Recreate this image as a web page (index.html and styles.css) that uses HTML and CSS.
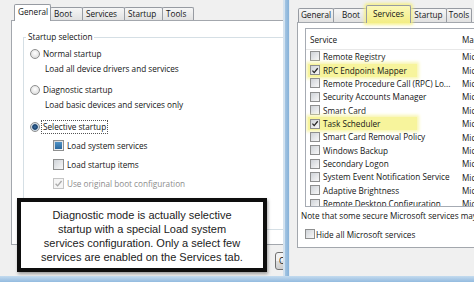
FILE: index.html
```html
<!DOCTYPE html>
<html lang="en">
<head>
<meta charset="utf-8">
<title>System Configuration</title>
<link rel="stylesheet" href="styles.css">
</head>
<body>
<div class="stage">
  <div class="main">
    <section class="pane pane-left">
      <div class="tabs tabs-left">
        <div class="tab tab-sel tl-general">General</div>
        <div class="tab tl-boot">Boot</div>
        <div class="tab tl-services">Services</div>
        <div class="tab tl-startup">Startup</div>
        <div class="tab tl-tools">Tools</div>
      </div>
      <div class="page page-left">
        <fieldset class="group">
          <legend class="group-title">Startup selection</legend>
          <div class="group-body">
            <div class="opt"><span class="radio"></span><span class="opt-label">Normal startup</span></div>
            <div class="desc">Load all device drivers and services</div>
            <div class="opt opt-gap1"><span class="radio"></span><span class="opt-label">Diagnostic startup</span></div>
            <div class="desc">Load basic devices and services only</div>
            <div class="opt opt-gap2"><span class="radio radio-on"></span><span class="opt-label focus">Selective startup</span></div>
            <div class="sub"><span class="check check-mixed"></span><span>Load system services</span></div>
            <div class="sub"><span class="check"></span><span>Load startup items</span></div>
            <div class="sub sub-disabled"><span class="check check-disabled"><svg viewBox="0 0 10 10"><path d="M1.8 5.2 L4 7.6 L8.4 2.2" fill="none" stroke="#a9a9a9" stroke-width="1.5"/></svg></span><span>Use original boot configuration</span></div>
          </div>
        </fieldset>
      </div>
      <div class="btnbar"><div class="btn">Cancel</div></div>
      <div class="callout">Diagnostic mode is actually selective<br>startup with a special Load system<br>services configuration. Only a select few<br>services are enabled on the Services tab.</div>
    </section>
    <div class="divider"></div>
    <section class="pane pane-right">
      <div class="tabs tabs-right">
        <div class="tab tr-general">General</div>
        <div class="tab tr-boot">Boot</div>
        <div class="tab tab-sel tab-hl tr-services">Services</div>
        <div class="tab tr-startup">Startup</div>
        <div class="tab tr-tools">Tools</div>
      </div>
      <div class="page page-right">
        <div class="list">
          <div class="list-head"><span class="col-name">Service</span><span class="col-mfr">Manufacturer</span></div>
          <div class="row"><span class="col-name"><span class="item"><span class="check"></span>Remote Registry</span></span><span class="col-mfr">Microsoft Corporation</span></div>
          <div class="row"><span class="col-name"><span class="item hl"><span class="check"><svg viewBox="0 0 10 10"><path d="M1.8 5.2 L4 7.6 L8.4 2.2" fill="none" stroke="#262626" stroke-width="1.6"/></svg></span>RPC Endpoint Mapper</span></span><span class="col-mfr">Microsoft Corporation</span></div>
          <div class="row"><span class="col-name"><span class="item"><span class="check"></span>Remote Procedure Call (RPC) Lo...</span></span><span class="col-mfr">Microsoft Corporation</span></div>
          <div class="row"><span class="col-name"><span class="item"><span class="check"></span>Security Accounts Manager</span></span><span class="col-mfr">Microsoft Corporation</span></div>
          <div class="row"><span class="col-name"><span class="item"><span class="check"></span>Smart Card</span></span><span class="col-mfr">Microsoft Corporation</span></div>
          <div class="row"><span class="col-name"><span class="item hl"><span class="check"><svg viewBox="0 0 10 10"><path d="M1.8 5.2 L4 7.6 L8.4 2.2" fill="none" stroke="#262626" stroke-width="1.6"/></svg></span>Task Scheduler</span></span><span class="col-mfr">Microsoft Corporation</span></div>
          <div class="row"><span class="col-name"><span class="item"><span class="check"></span>Smart Card Removal Policy</span></span><span class="col-mfr">Microsoft Corporation</span></div>
          <div class="row"><span class="col-name"><span class="item"><span class="check"></span>Windows Backup</span></span><span class="col-mfr">Microsoft Corporation</span></div>
          <div class="row"><span class="col-name"><span class="item"><span class="check"></span>Secondary Logon</span></span><span class="col-mfr">Microsoft Corporation</span></div>
          <div class="row"><span class="col-name"><span class="item"><span class="check"></span>System Event Notification Service</span></span><span class="col-mfr">Microsoft Corporation</span></div>
          <div class="row"><span class="col-name"><span class="item"><span class="check"></span>Adaptive Brightness</span></span><span class="col-mfr">Microsoft Corporation</span></div>
          <div class="row"><span class="col-name"><span class="item"><span class="check"></span>Remote Desktop Configuration</span></span><span class="col-mfr">Microsoft Corporation</span></div>
        </div>
        <div class="note">Note that some secure Microsoft services may not be disabled.</div>
        <div class="hide"><span class="check"></span><span>Hide all Microsoft services</span></div>
      </div>
    </section>
  </div>
  <div class="frame-bottom"></div>
</div>
</body>
</html>
```
FILE: styles.css
```css
* { box-sizing: border-box; margin: 0; padding: 0; }
html, body { width: 474px; height: 282px; overflow: hidden; }
body {
  background: #f0f0f0;
  font-family: "Open Sans", "Noto Sans", sans-serif;
  font-size: 8.2px;
  color: #141414;
}
.stage { width: 474px; height: 282px; display: flex; flex-direction: column; }
.main { display: flex; height: 276px; flex: none; }
.frame-bottom { flex: 1; background: linear-gradient(#c4dbef, #93bbdf); }

.pane { position: relative; overflow: hidden; display: flex; flex-direction: column; background: #f0f0f0; }
.pane-left { width: 283px; flex: none; padding-left: 11px; }
.pane-right { flex: 1; padding-left: 7px; }
.divider {
  width: 7px; flex: none;
  background: linear-gradient(90deg, #d3e2ef 0, #d3e2ef 2px, #a3c5e3 2px, #86b1d8 6px, #e4ebf1 6px);
}

/* tabs */
.tabs { display: flex; align-items: flex-end; flex: none; position: relative; z-index: 1; }
.tab {
  flex: none; border: 1px solid #979ba2; border-bottom: 0; margin-right: -1px;
  background: linear-gradient(#f6f6f6, #e1e1e1); white-space: nowrap;
  border-radius: 2px 2px 0 0;
}
.tab-sel { background: #fff; position: relative; z-index: 2; }

.tabs-left { height: 20px; padding-left: 5px; }
.tabs-left .tab { height: 13px; line-height: 12px; padding-left: 3px; }
.tabs-left .tab-sel { height: 17px; line-height: 14px; margin-left: -2px; margin-bottom: -1px; }
.tl-general { width: 37px; }
.tl-boot { width: 33px; }
.tl-services { width: 43px; }
.tl-startup { width: 39px; }
.tl-tools { width: 32px; }

.tabs-right { height: 22px; padding-left: 1px; }
.tabs-right .tab { height: 14px; line-height: 12px; text-align: center; }
.tabs-right .tab-sel { height: 18px; line-height: 15px; margin-left: -2px; margin-bottom: -1px; }
.tr-general { width: 36px; }
.tr-boot { width: 36px; }
.tr-services { width: 45px; }
.tr-startup { width: 37px; }
.tr-tools { width: 26px; }
.tab-hl {
  background: linear-gradient(#fbf8b8, #f3ed84);
  box-shadow: 0 0 3px 2px rgba(246, 240, 130, 0.85);
}

/* tab pages */
.page { flex: none; background: #fff; border: 1px solid #a3a7ad; position: relative; z-index: 0; }
.page-left { height: 225px; width: 300px; padding: 9px 0 0 11px; }
.page-right { height: 226px; width: 220px; padding-top: 5px; }

/* group box */
.group { border: 1px solid #d5dfe5; width: 300px; height: 200px; padding: 0; min-width: 0; }
.group-title { padding: 0 2px; margin-left: 2px; line-height: 14px; }
.group-body { padding: 2px 0 0 6px; }

.opt { display: flex; align-items: center; height: 15px; }
.opt-gap1 { margin-top: 6px; }
.opt-gap2 { margin-top: 7px; }
.radio {
  width: 10px; height: 10px; border-radius: 50%; flex: none; margin-right: 3px;
  border: 1px solid #8e8f8f;
  background: radial-gradient(circle at 50% 40%, #ffffff, #d4d4d4);
}
.radio-on {
  background: radial-gradient(circle, #3a6fa4 0, #173f6a 2.4px, #c8d6e3 3.2px, #eef2f5 100%);
}
.opt-label { line-height: 12px; }
.focus { outline: 1px dotted #555; padding: 0 1px; margin-left: -1px; }
.desc { height: 15px; line-height: 15px; padding-left: 15px; }
.sub { display: flex; align-items: center; height: 15px; margin-top: 4px; padding-left: 23px; }
.sub-disabled { color: #8d8d8d; }

.check {
  width: 11px; height: 11px; flex: none; margin-right: 3px;
  border: 1px solid #8e8f8f;
  background: linear-gradient(135deg, #cfd3d8, #f8f8f8);
  display: flex; align-items: center; justify-content: center;
}
.check svg { width: 9px; height: 9px; display: block; }
.check-mixed::after {
  content: ""; width: 7px; height: 7px;
  background: linear-gradient(#4f92c6, #2a679c);
}
.check-disabled { border-color: #c4c4c4; background: #f5f5f5; }

/* buttons behind callout */
.btnbar { flex: 1; }
.btn {
  margin: 7px 0 0 264px; width: 75px; height: 18px; line-height: 16px; padding-left: 3px;
  border: 1px solid #707070; border-radius: 3px;
  background: linear-gradient(#f2f2f2 50%, #dddddd 50%, #cfcfcf);
}

/* callout */
.callout {
  position: absolute; left: 17px; top: 198px; width: 250px; height: 74px;
  border: 4px solid #0e0e0e; background: #fff;
  box-shadow: 1px 2px 3px rgba(0, 0, 0, 0.35);
  font-family: "Liberation Sans", Arial, sans-serif; font-size: 11px; line-height: 14px;
  text-align: center; color: #222; padding-top: 6px; z-index: 5;
}

/* services list */
.list {
  margin-left: 7px; height: 179px; width: 220px;
  border: 1px solid #a6abb3; background: #fff; overflow: hidden;
}
.list-head { display: flex; align-items: center; height: 21px; border-bottom: 1px solid #e8e8e8; }
.col-name { width: 156px; flex: none; padding-left: 4px; white-space: nowrap; overflow: visible; }
.col-mfr { white-space: nowrap; }
.row { display: flex; align-items: center; height: 13.4px; }
.item { display: inline-flex; align-items: center; height: 13px; }
.row .check, .hide .check { width: 10px; height: 10px; }
.hl {
  width: 109px; margin-left: -2px; padding-left: 2px;
  background: #f7f49c; box-shadow: 0 0 3px 2px #f8f6b4;
}
.note { margin-top: 2px; padding-left: 3px; line-height: 14px; white-space: nowrap; }
.hide { display: flex; align-items: center; height: 14px; margin-top: 4px; padding-left: 7px; }
.hide .check { margin-right: 1px; }
```
